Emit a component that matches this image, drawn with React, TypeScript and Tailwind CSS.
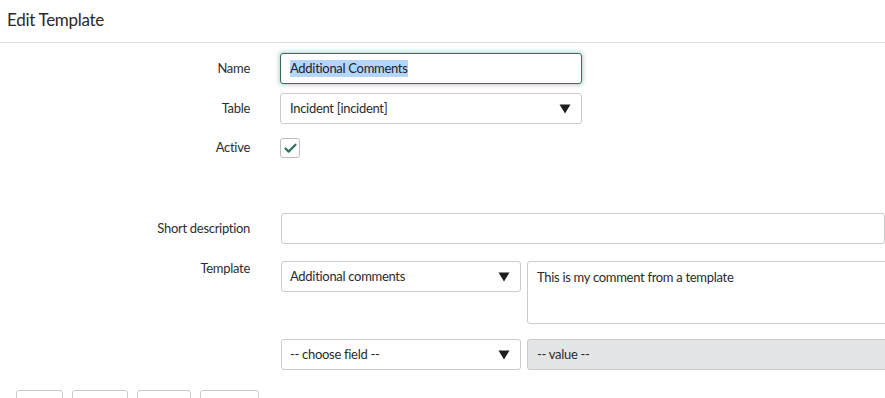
import { Check } from "lucide-react";

const font = { fontFamily: "Lato, 'Noto Sans', sans-serif" };

function Arrow() {
  return (
    <svg width="12" height="10" viewBox="0 0 12 10" className="shrink-0">
      <path d="M0.5 0.5 H11.5 L6 9.5 Z" fill="#1f1f1f" />
    </svg>
  );
}

function Label({ children, top }: { children: string; top?: boolean }) {
  return (
    <div className={`w-[250px] shrink-0 text-right text-[13px] tracking-[-0.3px] text-[#2e2e2e] ${top ? "self-start -mt-[2px]" : ""}`}>
      {children}
    </div>
  );
}

export default function App() {
  return (
    <div className="w-[885px] h-[398px] overflow-hidden bg-white text-[#2b2b2b]" style={font}>
      {/* header */}
      <div className="h-[43px] border-b border-[#dcdcdc] flex items-center px-[7px]">
        <h1 className="text-[17px] tracking-[-0.3px] text-[#2a2a2a] -mt-[3px]">Edit Template</h1>
      </div>

      <div className="pt-[10px] flex flex-col text-[13px] tracking-[-0.3px]">
        {/* Name */}
        <div className="flex items-center gap-[30px]">
          <Label>Name</Label>
          <div className="w-[302px] h-[31px] rounded-[3px] border border-[#2f6f62] shadow-[0_0_4px_1px_rgba(47,111,98,0.35)] flex items-center px-[9px]">
            <span className="bg-[#b4d5fe] text-[#222] leading-[17px]">Additional Comments</span>
          </div>
        </div>

        {/* Table */}
        <div className="flex items-center gap-[30px] mt-[9px]">
          <Label>Table</Label>
          <div className="w-[302px] h-[31px] rounded-[3px] border border-[#cbcbcb] flex items-center justify-between pl-[9px] pr-[10px]">
            <span>Incident [incident]</span>
            <Arrow />
          </div>
        </div>

        {/* Active */}
        <div className="flex items-center gap-[30px] mt-[14px]">
          <Label>Active</Label>
          <div className="w-[20px] h-[20px] rounded-[3px] border border-[#bdbdbd] flex items-center justify-center">
            <Check size={15} strokeWidth={3.5} className="text-[#2b7363]" />
          </div>
        </div>

        {/* Short description */}
        <div className="flex items-center gap-[31px] mt-[55px]">
          <Label>Short description</Label>
          <div className="w-[640px] h-[31px] rounded-[3px] border border-[#cbcbcb]" />
        </div>

        {/* Template */}
        <div className="flex gap-[31px] mt-[17px]">
          <Label top>Template</Label>
          <div className="flex flex-col gap-[15px]">
            <div className="flex gap-[6px]">
              <div className="w-[240px] h-[31px] rounded-[3px] border border-[#cbcbcb] flex items-center justify-between pl-[8px] pr-[10px]">
                <span>Additional comments</span>
                <Arrow />
              </div>
              <div className="w-[400px] h-[63px] rounded-[3px] border border-[#cbcbcb] px-[9px] pt-[6px]">
                This is my comment from a template
              </div>
            </div>
            <div className="flex gap-[6px]">
              <div className="w-[240px] h-[31px] rounded-[3px] border border-[#cbcbcb] flex items-center justify-between pl-[8px] pr-[10px]">
                <span>-- choose field --</span>
                <Arrow />
              </div>
              <div className="w-[400px] h-[31px] rounded-[3px] border border-[#cbcbcb] bg-[#e4e5e7] flex items-center px-[9px]">
                -- value --
              </div>
            </div>
          </div>
        </div>

        {/* buttons */}
        <div className="flex gap-[9px] pl-[16px] mt-[20px]">
          {[47, 56, 54, 59].map((w, i) => (
            <div key={i} className="h-[30px] rounded-[3px] border border-[#cbcbcb]" style={{ width: w }} />
          ))}
        </div>
      </div>
    </div>
  );
}
